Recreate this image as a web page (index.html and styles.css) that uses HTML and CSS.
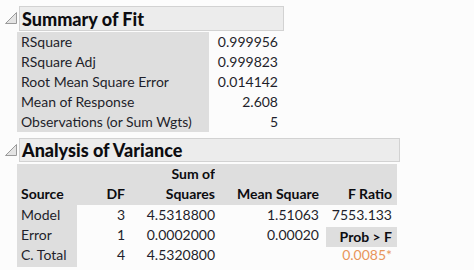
FILE: index.html
```html
<!DOCTYPE html>
<html>
<head>
<meta charset="utf-8">
<link rel="stylesheet" href="styles.css">
</head>
<body>
<div class="report">
  <div class="outline">
    <svg class="tri" width="19" height="25" viewBox="0 0 19 25"><polygon points="5.5,17.5 16.5,17.5 16.5,6.5" fill="#e4e4e4" stroke="#9a9a9a" stroke-width="1"/></svg>
    <div class="title fit-title">Summary of Fit</div>
  </div>
  <div class="fit">
    <div class="lab">RSquare</div><div class="val">0.999956</div>
    <div class="lab">RSquare Adj</div><div class="val">0.999823</div>
    <div class="lab">Root Mean Square Error</div><div class="val">0.014142</div>
    <div class="lab">Mean of Response</div><div class="val">2.608</div>
    <div class="lab">Observations (or Sum Wgts)</div><div class="val">5</div>
  </div>

  <div class="outline second">
    <svg class="tri" width="19" height="24" viewBox="0 0 19 24"><polygon points="5.5,17.5 16.5,17.5 16.5,6.5" fill="#e4e4e4" stroke="#9a9a9a" stroke-width="1"/></svg>
    <div class="title anova-title">Analysis of Variance</div>
  </div>
  <div class="anova">
    <div class="hd src">Source</div>
    <div class="hd r">DF</div>
    <div class="hd r">Sum of<br>Squares</div>
    <div class="hd r">Mean Square</div>
    <div class="hd r last">F Ratio</div>

    <div class="src-cell">Model</div>
    <div class="num">3</div>
    <div class="num">4.5318800</div>
    <div class="num">1.51063</div>
    <div class="num last">7553.133</div>

    <div class="src-cell">Error</div>
    <div class="num">1</div>
    <div class="num">0.0002000</div>
    <div class="num">0.00020</div>
    <div class="num last"><span class="prob">Prob &gt; F</span></div>

    <div class="src-cell">C. Total</div>
    <div class="num">4</div>
    <div class="num">4.5320800</div>
    <div class="num"></div>
    <div class="num last orange">0.0085*</div>
  </div>
</div>
</body>
</html>
```

FILE: styles.css
```css
html, body {
  margin: 0;
  padding: 0;
  background: #fcfcfc;
}
body {
  font-family: "Lato", "Open Sans", sans-serif;
  font-size: 14px;
  color: #1f1f2b;
}
.report {
  padding-top: 6px;
}
.outline {
  display: flex;
  align-items: stretch;
}
.outline.second {
  margin-top: 6px;
}
.tri {
  flex: none;
  display: block;
}
.title {
  box-sizing: border-box;
  background: #ececec;
  border: 1px solid #d2d2d2;
  font-weight: 900;
  font-size: 18px;
  color: #0c0c10;
  padding-left: 2px;
  display: flex;
  align-items: center;
}
.fit-title {
  width: 265px;
  height: 25px;
}
.anova-title {
  width: 381px;
  height: 24px;
}
.fit {
  margin-top: 1px;
  margin-left: 17px;
  display: grid;
  grid-template-columns: 192px 69px;
  grid-auto-rows: 20px;
}
.lab {
  background: #dedede;
  padding-left: 4px;
  line-height: 20px;
  white-space: nowrap;
}
.val {
  text-align: right;
  line-height: 20px;
}
.anova {
  margin-top: 2px;
  margin-left: 17px;
  display: grid;
  grid-template-columns: 60px 48px 90px 104px 78px;
  grid-template-rows: 41px 20px 20px 22px;
}
.hd {
  background: #dedede;
  font-weight: 700;
  color: #0c0c10;
  display: flex;
  align-items: flex-end;
  line-height: 20px;
  padding-bottom: 1px;
  box-sizing: border-box;
  white-space: nowrap;
}
.hd.src {
  padding-left: 4px;
}
.hd.r {
  justify-content: flex-end;
  text-align: right;
}
.hd.last {
  padding-right: 5px;
}
.src-cell {
  background: #dedede;
  padding-left: 4px;
  line-height: 20px;
}
.num {
  text-align: right;
  line-height: 20px;
}
.num.last {
  padding-right: 5px;
  display: flex;
  justify-content: flex-end;
  align-items: flex-start;
}
.prob {
  background: #dedede;
  font-weight: 700;
  color: #0c0c10;
  display: block;
  width: 71px;
  margin-right: -5px;
  padding-right: 5px;
  box-sizing: border-box;
  text-align: right;
  margin-top: 2px;
  height: 20px;
  line-height: 20px;
}
.orange {
  color: #e8955a;
}
```
